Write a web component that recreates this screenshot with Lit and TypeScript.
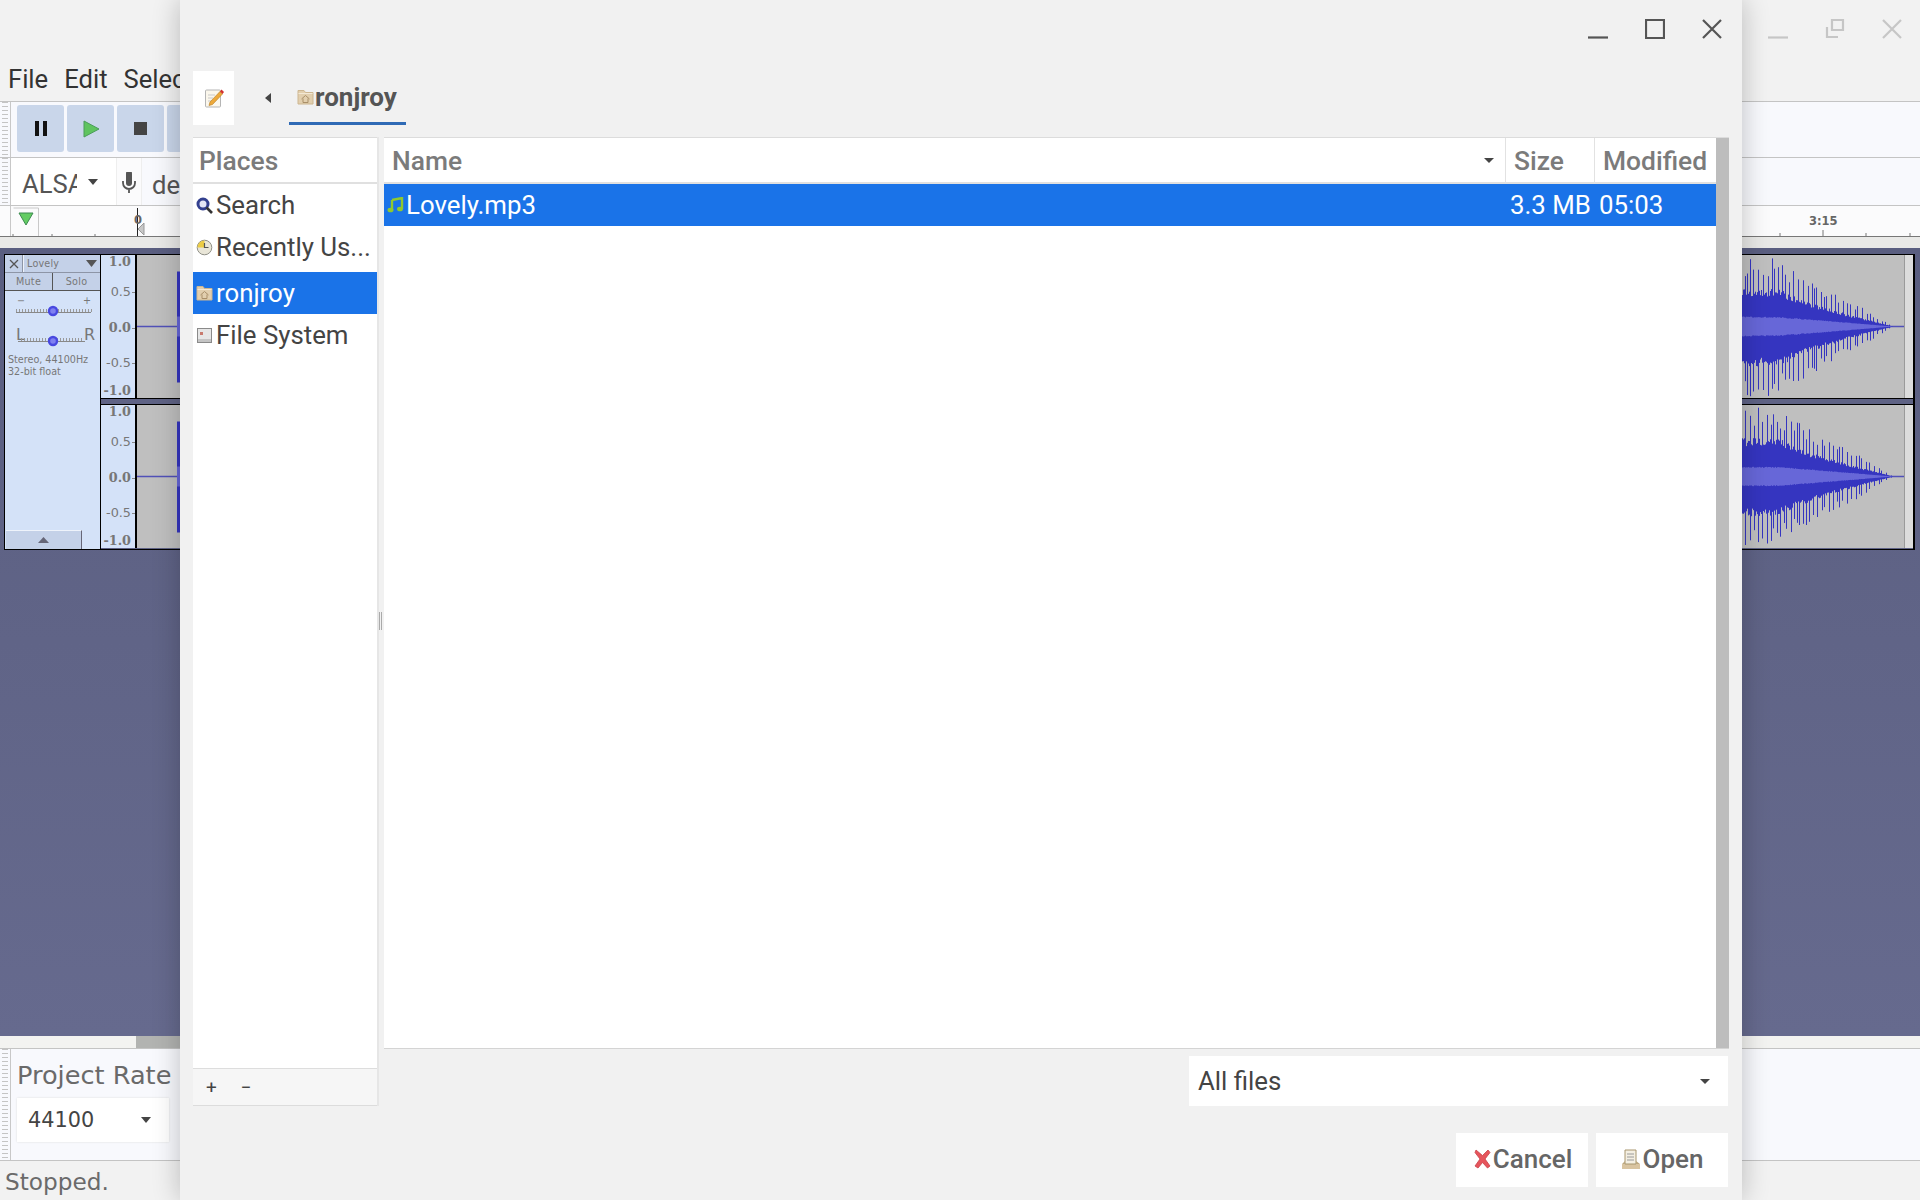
import { LitElement, html, css, svg } from "lit";
import { customElement } from "lit/decorators.js";

function wavePaths(seed: number, w: number, h: number) {
  let s = seed;
  const rnd = () => {
    s = (s * 16807) % 2147483647;
    return s / 2147483647;
  };
  const interp = (pts: number[][], x: number) => {
    for (let i = 1; i < pts.length; i++) {
      if (x <= pts[i][0]) {
        const [a, b] = pts[i - 1];
        const [c, d] = pts[i];
        return b + ((d - b) * (x - a)) / (c - a);
      }
    }
    return 0;
  };
  const core = [[1600, 38], [1780, 36], [1800, 26], [1850, 11], [1893, 0]];
  const spike = [[1600, 64], [1770, 68], [1800, 52], [1833, 34], [1860, 20], [1893, 0]];
  const rms = [[1600, 11], [1780, 9], [1820, 6], [1893, 0]];
  const c = h / 2;
  const ox = 137;
  let dark = "";
  let light = "";
  let nextSpike = 1735;
  for (let x = 1735; x <= 1893; x++) {
    const coreTop = interp(core, x) * (0.82 + rnd() * 0.24);
    const coreBot = interp(core, x) * (0.86 + rnd() * 0.24);
    dark += `M${x - ox + 0.5} ${(c - coreTop).toFixed(1)}V${(c + coreBot).toFixed(1)}`;
    if (x >= nextSpike) {
      const top = interp(spike, x) * (0.74 + rnd() * 0.28);
      const bot = interp(spike, x) * (0.76 + rnd() * 0.28);
      dark += `M${x - ox + 0.5} ${(c - top).toFixed(1)}V${(c + bot).toFixed(1)}`;
      nextSpike = x + 2 + Math.floor(rnd() * 4);
    }
    const r = interp(rms, x) * (0.94 + rnd() * 0.12);
    light += `M${x - ox + 0.5} ${(c - r).toFixed(1)}V${(c + r).toFixed(1)}`;
  }
  for (let x = 177; x < 182; x++) {
    dark += `M${x - ox + 0.5} ${c - 55}V${c + 56}`;
    light += `M${x - ox + 0.5} ${c - 10}V${c + 10}`;
  }
  return { dark, light, c, w, h };
}

const wave = (seed: number) => {
  const p = wavePaths(seed, 1767, 143);
  return svg`<svg class="wave" width="1767" height="143" viewBox="0 0 1767 143">
    <path d="M0 ${p.c}H40M1750 ${p.c}H1767" stroke="#5151b8" stroke-width="1.4" fill="none"/>
    <path d="${p.dark}" stroke="#3535c0" stroke-width="1" fill="none"/>
    <path d="${p.light}" stroke="#6767d8" stroke-width="1" fill="none"/>
  </svg>`;
};

const caret = html`<svg class="caret" width="12" height="6" viewBox="0 0 12 6"><path d="M1 0H11L6 6Z" fill="#444"/></svg>`;

const homeFolder = html`<svg width="17" height="16" viewBox="0 0 17 16">
  <path d="M1 1.500H7L8.500 3.500H16V15H1Z" fill="#e2cfae" stroke="#cdb690"/>
  <path d="M1.500 4.500H15.500" stroke="#f3e8d4"/>
  <path d="M4.500 10L8.500 6.500L12.500 10M6 9.500V13.500H11V9.500" fill="none" stroke="#a98f69" stroke-width="1"/>
</svg>`;

const ctl = (kind: string) => {
  const d =
    kind === "min"
      ? "M0 18.500H20"
      : kind === "max"
        ? "M1 1H19V19H1Z"
        : kind === "close"
          ? "M1 1L19 19M19 1L1 19"
          : "M7 1H18V11H7ZM2 8V18H13";
  return html`<span class="ctl"><svg width="20" height="20" viewBox="0 0 20 20"><path d="${d}" fill="none" stroke="currentColor" stroke-width="2.200"/></svg></span>`;
};

const sliderTicks = (from: number, to: number, y: number) => {
  let d = "";
  for (let x = from; x <= to; x += 3) d += `M${x + 0.5} ${y}v-3`;
  return d;
};

@customElement("app-root")
export class AppRoot extends LitElement {
  static styles = css`
    :host { display: block; width: 1920px; height: 1200px; }
    * { box-sizing: border-box; }
    .app { position: relative; width: 1920px; height: 1200px; overflow: hidden; display: flex; flex-direction: column; background: #f2f2f2; font-family: Roboto, sans-serif; }
    .ctl { width: 57px; height: 55px; display: flex; align-items: center; justify-content: center; padding-top: 2px; }
    .controls { height: 55px; display: flex; justify-content: flex-end; flex: none; }
    .bg-controls { color: #c6c6c6; }
    .menu { height: 47px; display: flex; gap: 16px; padding: 7px 0 0 8px; font-size: 25.600px; line-height: 34px; color: #333; flex: none; border-bottom: 1px solid #c4c4c4; }
    .bar { display: flex; background: #f8f9fd; border-bottom: 1px solid #c4c4c4; flex: none; }
    .bar.t1 { height: 56px; }
    .bar.t2 { height: 48px; }
    .grip { width: 11px; flex: none; border-right: 1px solid #c8c8c8; padding: 0 2px; }
    .grip i { display: block; width: 6px; height: 100%; background: repeating-linear-gradient(#c4c4c4 0 1px, #f8f9fd 1px 4px); }
    .btns { display: flex; gap: 3px; padding: 3px 0 0 6px; }
    .tbtn { width: 47px; height: 47px; background: #c9d6ea; border-radius: 3px; display: flex; align-items: center; justify-content: center; }
    .alsa { width: 105px; background: #fff; display: flex; align-items: center; padding: 5px 0 0 11px; color: #555; font-size: 25.600px; gap: 10px; }
    .alsa span { width: 55px; overflow: hidden; white-space: nowrap; }
    .alsa svg { margin-top: -5px; }
    .mic { width: 26px; display: flex; align-items: center; justify-content: center; background: #fbfbfc; border-left: 1px solid #eee; border-right: 1px solid #eee; padding-top: 3px; }
    .de { padding: 12px 0 0 10px; color: #555; font-size: 25.600px; line-height: 30px; white-space: nowrap; }
    .ruler { height: 31px; background: #fbfbfc; border-bottom: 1px solid #777; flex: none; display: flex; position: relative; }
    .ruler svg { display: block; }
    .time { font: bold 11.500px "DejaVu Sans", sans-serif; fill: #666; }
    .gap { height: 11px; background: #e9e9e7; flex: none; }
    .tracks { height: 788px; flex: none; background: linear-gradient(#5a5e80, #666a8e); padding: 6px 0 0 4px; }
    .track { width: 1911px; height: 296px; border: 1px solid #000; border-width: 1px 2px 1px 1px; display: flex; }
    .panel { width: 96px; flex: none; background: #d4e2f8; border-right: 1px solid #000; display: flex; flex-direction: column; color: #777; font: 9.600px "DejaVu Sans", sans-serif; }
    .tt { height: 18px; display: flex; background: #c4d1e8; border-bottom: 1px solid #8d95a6; }
    .tx { width: 18px; border-right: 1px solid #8d95a6; display: flex; align-items: center; justify-content: center; }
    .tn { flex: 1; padding-left: 3px; line-height: 17px; letter-spacing: .2px; border-left: 1px solid #eef3fb; display: flex; justify-content: space-between; align-items: center; padding-right: 3px; }
    .ms { height: 18px; display: flex; background: #c4d1e8; border-bottom: 1px solid #555; }
    .ms span { flex: 1; text-align: center; line-height: 17px; letter-spacing: .3px; }
    .ms span:first-child { border-right: 1px solid #555; }
    .panel svg.sl { display: block; margin-top: 1px; }
    .sl text { font: 9.600px "DejaVu Sans", sans-serif; fill: #777; }
    .sl text.big { font-size: 16px; }
    .fmt { padding: 6px 0 0 3px; line-height: 12px; }
    .coll { margin: auto 0 0 1px; width: 76px; height: 19px; background: #c4d1e8; border-top: 1px solid #eef3fb; border-right: 1px solid #667; display: flex; align-items: center; justify-content: center; }
    .chans { flex: 1; display: flex; flex-direction: column; min-width: 0; }
    .chan { height: 143px; display: flex; flex: none; }
    .sep { height: 7px; background: #5f6385; border-top: 1px solid #000; border-bottom: 1px solid #000; flex: none; }
    .vr { width: 36px; flex: none; background: #d4e2f8; border-right: 2px solid #000; display: grid; grid-template-rows: 30px 36px 35px 28px 14px; color: #777; font: 12.800px/14px "DejaVu Sans", sans-serif; }
    .vr div { display: flex; justify-content: flex-end; align-items: flex-start; gap: 1px; }
    .vr div:first-child { align-items: flex-start; }
    .vr b { font-family: "DejaVu Serif", serif; }
    .vr i { width: 3px; height: 1px; background: #888; margin-top: 7px; }
    .vr s { width: 3px; }
    .wavebox { flex: 1; background: #bfbfbf; position: relative; overflow: hidden; }
    .wave { display: block; }
    .endbar { position: absolute; left: 1767px; top: 0; bottom: 0; width: 10px; background: #dcdcdc; border-left: 1px solid #9a9a9a; }
    .hs { height: 13px; flex: none; display: flex; background: #f3f3f1; border-bottom: 1px solid #c4c4c4; }
    .hs i { display: block; width: 136px; }
    .hs b { display: block; width: 50px; background: #b2b3b1; }
    .sel { height: 112px; flex: none; display: flex; background: #f8f9fd; border-bottom: 1px solid #c4c4c4; }
    .sel .col { padding: 6px 0 0 6px; }
    .pr { font: 25.600px/40px "DejaVu Sans", sans-serif; color: #6a6a6a; white-space: nowrap; }
    .rate { margin-top: 3px; width: 152px; height: 44px; background: #fff; display: flex; align-items: center; justify-content: space-between; padding: 0 17px 0 11px; font: 20.800px "DejaVu Sans", sans-serif; color: #444; box-shadow: 0 0 2px #ddd; }
    .status { flex: 1; padding-left: 5px; font: 23.200px/42px "DejaVu Sans", sans-serif; color: #6a6a6a; }

    .dialog { position: absolute; left: 180px; top: 0; width: 1562px; height: 1200px; background: #f1f1f1; box-shadow: 0 0 26px rgba(0, 0, 0, .24); padding: 0 13px; display: flex; flex-direction: column; color: #444; font-family: Roboto, sans-serif; }
    .dialog .controls { margin-right: -11px; color: #555; }
    .path { margin-top: 16px; height: 54px; display: flex; align-items: stretch; flex: none; }
    .edit { width: 41px; background: #fff; display: flex; align-items: center; justify-content: center; }
    .back { width: 55px; display: flex; align-items: center; justify-content: center; padding-left: 12px; }
    .crumb { width: 117px; display: flex; align-items: center; gap: 1px; padding-left: 8px; border-bottom: 3px solid #2f6ab5; font-size: 26px; font-weight: 700; color: #555; }
    .main { margin-top: 12px; display: flex; flex: none; }
    .places { width: 184px; height: 969px; background: #fff; border: 1px solid #dcdcdc; border-width: 1px 0; display: flex; flex-direction: column; flex: none; }
    .head { height: 46px; flex: none; border-bottom: 2px solid #e0e0e0; font-size: 26.400px; font-weight: 500; color: #7b7b7b; line-height: 44px; padding: 1px 0 0 6px; }
    .pl { height: 42px; display: flex; align-items: center; flex: none; font-size: 25.800px; color: #444; padding-left: 3px; gap: 3px; white-space: nowrap; }
    .pl svg { flex: none; }
    .pl.sel2 { background: #1a73e8; color: #fff; margin-top: 4px; }
    .foot { margin-top: auto; height: 37px; flex: none; background: #f6f6f6; border-top: 1px solid #ddd; display: flex; align-items: center; padding: 1px 0 0 13px; gap: 24px; font-size: 19px; color: #444; line-height: 1; }
    .split { width: 7px; flex: none; display: flex; align-items: flex-start; justify-content: center; padding-top: 475px; background: linear-gradient(90deg, #e6e6e6 0 2px, transparent 2px); }
    .split i { display: block; width: 3px; height: 18px; border: 1px solid #aaa; border-width: 0 1px; }
    .right { flex: 1; display: flex; flex-direction: column; min-width: 0; }
    .list { height: 912px; display: flex; background: #fff; border-top: 1px solid #dcdcdc; border-bottom: 1px solid #d4d4d4; }
    .lc { flex: 1; display: flex; flex-direction: column; min-width: 0; }
    .scroll { width: 13px; flex: none; background: #bdbdbd; }
    .lh { height: 46px; display: flex; font-size: 26.400px; font-weight: 500; color: #7b7b7b; line-height: 44px; flex: none; }
    .lh div { border-right: 1px solid #e2e2e2; padding: 1px 0 0 8px; border-bottom: 2px solid #e0e0e0; }
    .c1 { width: 1122px; }
    .c2 { width: 89px; }
    .c3 { flex: 1; }
    .lh .c1 { display: flex; justify-content: space-between; align-items: center; padding-right: 11px; }
    .lh .c3 { border-right: 0; white-space: nowrap; }
    .row { height: 42px; background: #1a73e8; color: #fff; font-size: 25.800px; display: flex; align-items: center; flex: none; }
    .row .c1 { display: flex; align-items: center; gap: 2px; padding-left: 3px; }
    .row .c2 { padding-left: 4px; white-space: nowrap; }
    .row .c3 { padding-left: 4px; }
    .filter { margin: 7px 1px 0 805px; height: 50px; background: #fff; display: flex; align-items: center; justify-content: space-between; padding: 0 18px 0 9px; font-size: 25.800px; color: #444; flex: none; }
    .actions { margin: 27px 1px 0 0; display: flex; justify-content: flex-end; gap: 8px; flex: none; }
    .btn { width: 132px; height: 54px; background: #fff; display: flex; align-items: center; justify-content: center; gap: 2px; padding-bottom: 3px; font-size: 26px; font-weight: 500; color: #666; }
    .btn.cancel { padding-left: 2px; }
  `;

  private channel(seed: number) {
    return html`<div class="chan">
      <div class="vr">
        <div><b>1.0</b><s></s></div>
        <div>0.5<i></i></div>
        <div><b>0.0</b><i></i></div>
        <div>-0.5<i></i></div>
        <div><b>-1.0</b><s></s></div>
      </div>
      <div class="wavebox">${wave(seed)}<div class="endbar"></div></div>
    </div>`;
  }

  render() {
    return html`<div class="app">
      <div class="controls bg-controls">${ctl("min")}${ctl("restore")}${ctl("close")}</div>
      <div class="menu"><span>File</span><span>Edit</span><span>Select</span></div>

      <div class="bar t1">
        <div class="grip"><i></i></div>
        <div class="btns">
          <div class="tbtn"><svg width="14" height="15" viewBox="0 0 14 15"><path d="M1 0H5V15H1ZM9 0H13V15H9Z" fill="#111"/></svg></div>
          <div class="tbtn"><svg width="18" height="18" viewBox="0 0 18 18"><path d="M2 1L17 9L2 17Z" fill="#5fc45f" stroke="#4a9c5a"/></svg></div>
          <div class="tbtn"><svg width="13" height="13" viewBox="0 0 13 13"><path d="M0 0H13V13H0Z" fill="#444"/></svg></div>
          <div class="tbtn"></div>
        </div>
      </div>

      <div class="bar t2">
        <div class="grip"><i></i></div>
        <div class="alsa"><span>ALSA</span>${caret}</div>
        <div class="mic"><svg width="16" height="22" viewBox="0 0 16 22"><path d="M5 1.500a3 3 0 0 1 6 0V11a3 3 0 0 1-6 0Z" fill="#555"/><path d="M2 9v2a6 6 0 0 0 12 0V9M8 17v4" fill="none" stroke="#555" stroke-width="1.800"/></svg></div>
        <div class="de">default</div>
      </div>

      <div class="ruler">
        <svg width="1920" height="30" viewBox="0 0 1920 30">
          <path d="M10.500 0V30" stroke="#c8c8c8"/>
          <path d="M13.500 2H38.500V30" fill="none" stroke="#c9c9c9"/>
          <path d="M19 7H33L26 19Z" fill="#63cc63" stroke="#3c8a50"/>
          <path d="M13 28v2M52 28v2M95 28v2M1780 27v3M1823 24v6M1866 27v3M1910 27v3" stroke="#777"/>
          <path d="M137.500 2V30" stroke="#222"/>
          <text class="time" x="134" y="18">0</text>
          <path d="M144 17V29L138 23Z" fill="#c8c8c8" stroke="#999"/>
          <text class="time" x="1809" y="19">3:15</text>
        </svg>
      </div>
      <div class="gap"></div>

      <div class="tracks">
        <div class="track">
          <div class="panel">
            <div class="tt">
              <div class="tx"><svg width="10" height="10" viewBox="0 0 10 10"><path d="M1 1L9 9M9 1L1 9" stroke="#555" stroke-width="1.300"/></svg></div>
              <div class="tn"><span>Lovely</span><svg width="11" height="7" viewBox="0 0 11 7"><path d="M0 0H11L5.500 7Z" fill="#555"/></svg></div>
            </div>
            <div class="ms"><span>Mute</span><span>Solo</span></div>
            <svg class="sl" width="94" height="56" viewBox="0 0 94 56">
              <text x="12" y="12">−</text><text x="78" y="12">+</text>
              <path d="M11 20.500H86" stroke="#888" fill="none"/>
              <path d="${sliderTicks(11, 86, 20)}" stroke="#999" fill="none"/>
              <circle cx="48" cy="19" r="4" fill="#7f80f0" stroke="#4848e0" stroke-width="2.400"/>
              <text class="big" x="11" y="48">L</text><text class="big" x="79" y="48">R</text>
              <path d="M13 49.500H80" stroke="#888"/>
              <path d="${sliderTicks(16, 78, 49)}" stroke="#999" fill="none"/>
              <circle cx="48" cy="49" r="4" fill="#7f80f0" stroke="#4848e0" stroke-width="2.400"/>
            </svg>
            <div class="fmt">Stereo, 44100Hz<br />32-bit float</div>
            <div class="coll"><svg width="11" height="6" viewBox="0 0 11 6"><path d="M5.500 0L11 6H0Z" fill="#667"/></svg></div>
          </div>
          <div class="chans">
            ${this.channel(7391)}
            <div class="sep"></div>
            ${this.channel(90211)}
          </div>
        </div>
      </div>

      <div class="hs"><i></i><b></b></div>

      <div class="sel">
        <div class="grip"><i></i></div>
        <div class="col">
          <div class="pr">Project Rate</div>
          <div class="rate"><span>44100</span>${caret}</div>
        </div>
      </div>
      <div class="status">Stopped.</div>

      <div class="dialog">
        <div class="controls">${ctl("min")}${ctl("max")}${ctl("close")}</div>
        <div class="path">
          <div class="edit">
            <svg width="20" height="20" viewBox="0 0 20 20">
              <rect x="1.500" y="2" width="15" height="17" rx="1" fill="#fbf7ec" stroke="#b5b5b5"/>
              <path d="M4 7H11M4 10H9M4 13H8" stroke="#c9c9c9"/>
              <path d="M6 14L16 3.500L18.500 6L8.500 16.500L5 17.500Z" fill="#eda93a" stroke="#b57b20" stroke-width=".6"/>
              <path d="M16 3.500L17.500 1.500L20 4L18.500 6Z" fill="#d3302f"/>
            </svg>
          </div>
          <div class="back"><svg width="6" height="10" viewBox="0 0 6 10"><path d="M6 0V10L0 5Z" fill="#444"/></svg></div>
          <div class="crumb">${homeFolder}<span>ronjroy</span></div>
        </div>

        <div class="main">
          <div class="places">
            <div class="head">Places</div>
            <div class="pl">
              <svg width="17" height="17" viewBox="0 0 17 17"><circle cx="7" cy="7" r="5" fill="#e4e6f5" stroke="#33408f" stroke-width="3"/><path d="M10.500 10.500L16 16" stroke="#333" stroke-width="2.600"/></svg>
              <span>Search</span>
            </div>
            <div class="pl">
              <svg width="17" height="17" viewBox="0 0 17 17"><circle cx="8.500" cy="8.500" r="7.300" fill="#e9e6d8" stroke="#8f8f86"/><path d="M1.500 8.500A7 7 0 0 1 8.500 1.500V8.500Z" fill="#eccc45"/><path d="M8.500 4V8.500H12.500" fill="none" stroke="#555" stroke-width="1.200"/></svg>
              <span>Recently Us...</span>
            </div>
            <div class="pl sel2">${homeFolder}<span>ronjroy</span></div>
            <div class="pl">
              <svg width="17" height="17" viewBox="0 0 17 17"><rect x="1.500" y="1.500" width="14" height="14" fill="#e6e6e6" stroke="#8a8a8a"/><path d="M2 12H15V15H2Z" fill="#c4c4c4"/><path d="M4 5H7V8H4Z" fill="#c87a6e"/></svg>
              <span>File System</span>
            </div>
            <div class="foot"><span>+</span><span>−</span></div>
          </div>
          <div class="split"><i></i></div>
          <div class="right">
            <div class="list">
              <div class="lc">
                <div class="lh">
                  <div class="c1"><span>Name</span><svg width="10" height="5" viewBox="0 0 10 5"><path d="M0 0H10L5 5Z" fill="#444"/></svg></div>
                  <div class="c2">Size</div>
                  <div class="c3">Modified</div>
                </div>
                <div class="row">
                  <div class="c1">
                    <svg width="17" height="16" viewBox="0 0 17 16"><path d="M5 3L15 1V12" fill="none" stroke="#8fc92f" stroke-width="2.400"/><path d="M5 3V13" stroke="#8fc92f" stroke-width="2.400"/><ellipse cx="3.500" cy="13" rx="3" ry="2.300" fill="#8fc92f"/><ellipse cx="13" cy="12" rx="3" ry="2.300" fill="#8fc92f"/></svg>
                    <span>Lovely.mp3</span>
                  </div>
                  <div class="c2">3.3 MB</div>
                  <div class="c3">05:03</div>
                </div>
              </div>
              <div class="scroll"></div>
            </div>
            <div class="filter"><span>All files</span><svg width="10" height="5" viewBox="0 0 10 5"><path d="M0 0H10L5 5Z" fill="#444"/></svg></div>
          </div>
        </div>

        <div class="actions">
          <div class="btn cancel">
            <svg width="17" height="20" viewBox="0 0 17 20"><path d="M2 1L8.500 6.500L14 1L16 3.500L11 10L16 17L13.500 19L8.500 13.500L4 19L1 17L6 10L1 3.500Z" fill="#e6555c" stroke="#c94149" stroke-width=".8"/></svg>
            <span>Cancel</span>
          </div>
          <div class="btn">
            <svg width="20" height="20" viewBox="0 0 20 20"><path d="M1 15H19V20H1Z" fill="#d9c4a0"/><path d="M4 1H15V15H4Z" fill="#f4efe2" stroke="#a8966f"/><path d="M6 5H13M6 8H13M6 11H13" stroke="#9a9a9a"/><path d="M1 15L4 12V15ZM19 15L15 12V15Z" fill="#bba77f"/></svg>
            <span>Open</span>
          </div>
        </div>
      </div>
    </div>`;
  }
}
